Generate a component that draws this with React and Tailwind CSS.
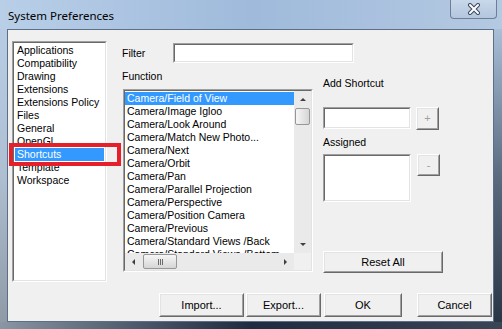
import React from "react"

const sections = [
  "Applications",
  "Compatibility",
  "Drawing",
  "Extensions",
  "Extensions Policy",
  "Files",
  "General",
  "OpenGl",
  "Shortcuts",
  "Template",
  "Workspace",
]

const functions = [
  "Camera/Field of View",
  "Camera/Image Igloo",
  "Camera/Look Around",
  "Camera/Match New Photo...",
  "Camera/Next",
  "Camera/Orbit",
  "Camera/Pan",
  "Camera/Parallel Projection",
  "Camera/Perspective",
  "Camera/Position Camera",
  "Camera/Previous",
  "Camera/Standard Views /Back",
  "Camera/Standard Views /Bottom",
]

const Sunken = ({ className = "", children }) => (
  <div className={`border border-[#a0a0a0] border-b-white border-r-white ${className}`}>
    <div className="w-full h-full border border-[#696969] border-b-[#e3e3e3] border-r-[#e3e3e3] bg-white overflow-hidden relative">
      {children}
    </div>
  </div>
)

const Button = ({ className = "", label, disabled }) => (
  <div className={`border border-white border-b-[#696969] border-r-[#696969] ${className}`}>
    <div
      className={`w-full h-full border border-[#e3e3e3] border-b-[#a0a0a0] border-r-[#a0a0a0] bg-[#f0f0f0] flex items-center justify-center text-[11px] ${
        disabled ? "text-[#a0a0a0]" : "text-black"
      }`}
    >
      {label}
    </div>
  </div>
)

const Arrow = ({ dir }) => {
  const pts = {
    up: "1,5 4,2 7,5",
    down: "1,2 4,5 7,2",
    left: "5,1 2,4 5,7",
    right: "2,1 5,4 2,7",
  }
  return (
    <svg width="8" height="8" viewBox="0 0 8 8">
      <polygon points={pts[dir]} fill="#404040" />
    </svg>
  )
}

const VThumb = () => (
  <div className="w-[15px] h-[17px] rounded-[2px] border border-[#979797] bg-gradient-to-r from-[#f6f6f6] to-[#d6d6d6]" />
)

const HThumb = () => (
  <div className="w-[34px] h-[15px] ml-[1px] rounded-[2px] border border-[#979797] bg-gradient-to-b from-[#f6f6f6] to-[#d6d6d6] flex items-center justify-center">
    <div className="flex gap-[1px]">
      <div className="w-[1px] h-[6px] bg-[#6a6a6a]" />
      <div className="w-[1px] h-[6px] bg-[#6a6a6a]" />
      <div className="w-[1px] h-[6px] bg-[#6a6a6a]" />
    </div>
  </div>
)

export default function App() {
  return (
    <div
      className="w-[502px] h-[329px] flex flex-col bg-gradient-to-r from-[#b9cfe8] via-[#9fbadb] to-[#b4c9e2] text-[10.5px] leading-[13px]"
      style={{ fontFamily: '"Liberation Sans", Arial, sans-serif' }}
    >
      {/* title bar */}
      <div className="h-[29px] flex items-start shrink-0">
        <div className="pl-[8px] pt-[8px] text-[11.5px] leading-[15px] text-black" style={{ fontFamily: '"Noto Sans", "Open Sans", sans-serif' }}>
          System Preferences
        </div>
        <div className="ml-auto mr-[5px] w-[47px] h-[19px] border border-t-0 border-[#6e7f95] rounded-b-[4px] bg-gradient-to-b from-[#c9d8ea] to-[#b3c6de] flex items-center justify-center">
          <svg width="14" height="12" viewBox="0 0 14 12">
            <path d="M3 2 L11 10 M11 2 L3 10" stroke="#3b4a5d" strokeWidth="4" strokeLinecap="round" />
            <path d="M3 2 L11 10 M11 2 L3 10" stroke="#ffffff" strokeWidth="2" strokeLinecap="round" />
          </svg>
        </div>
      </div>

      <div className="flex flex-1 min-h-0">
        <div className="w-[7px] bg-gradient-to-b from-[#b7cce4] via-[#aebfd2] to-[#8f9aa6]" />

        {/* client area */}
        <div className="w-[487px] border border-[#5d6f86] bg-[#f0f0f0] flex flex-col">
          <div className="flex pl-[4px] pt-[11px]">
            {/* left list */}
            <div className="relative">
              <Sunken className="w-[95px] h-[241px]">
                <div className="pt-[1px]">
                  {sections.map((s) => (
                    <div
                      key={s}
                      className={`h-[13px] pl-[2px] mx-[1px] whitespace-nowrap ${
                        s === "Shortcuts" ? "bg-[#3399ff] text-white" : "text-black"
                      }`}
                    >
                      {s}
                    </div>
                  ))}
                </div>
              </Sunken>
              <div className="absolute left-[-3px] top-[102px] w-[112px] h-[23px] border-[4px] border-[#e5202a]" />
            </div>

            {/* right side */}
            <div className="ml-[15px] pt-[2px] flex flex-col">
              <div className="flex items-center">
                <div className="w-[51px] text-black">Filter</div>
                <Sunken className="w-[181px] h-[20px]" />
              </div>

              <div className="flex mt-[7px]">
                <div className="flex flex-col">
                  <div className="text-black h-[13px]">Function</div>
                  <Sunken className="ml-[1px] mt-[6px] w-[190px] h-[183px]">
                    <div className="flex h-[162px]">
                      <div className="w-[169px] pt-[1px]">
                        {functions.map((f, i) => (
                          <div
                            key={f}
                            className={`h-[13px] pl-[2px] whitespace-nowrap ${
                              i === 0 ? "bg-[#3399ff] text-white" : "text-black"
                            }`}
                          >
                            {f}
                          </div>
                        ))}
                      </div>
                      {/* vertical scrollbar */}
                      <div className="w-[17px] h-[162px] bg-[#eaeaea] flex flex-col items-center">
                        <div className="h-[17px] flex items-center justify-center">
                          <Arrow dir="up" />
                        </div>
                        <VThumb />
                        <div className="flex-1" />
                        <div className="h-[17px] flex items-center justify-center">
                          <Arrow dir="down" />
                        </div>
                      </div>
                    </div>
                    {/* horizontal scrollbar */}
                    <div className="flex h-[17px]">
                      <div className="w-[169px] bg-[#eaeaea] flex items-center">
                        <div className="w-[17px] flex items-center justify-center">
                          <Arrow dir="left" />
                        </div>
                        <HThumb />
                        <div className="flex-1" />
                        <div className="w-[17px] flex items-center justify-center">
                          <Arrow dir="right" />
                        </div>
                      </div>
                      <div className="w-[17px] bg-[#f0f0f0]" />
                    </div>
                  </Sunken>
                </div>

                <div className="ml-[10px] flex flex-col">
                  <div className="mt-[7px] text-black h-[13px]">Add Shortcut</div>
                  <div className="flex mt-[17px]">
                    <Sunken className="w-[88px] h-[22px]" />
                    <Button className="ml-[5px] w-[23px] h-[23px]" label="+" disabled />
                  </div>
                  <div className="mt-[6px] text-black h-[13px]">Assigned</div>
                  <div className="flex mt-[5px]">
                    <Sunken className="w-[88px] h-[48px]" />
                    <Button className="ml-[6px] w-[23px] h-[22px]" label="-" disabled />
                  </div>
                  <Button className="mt-[49px] w-[120px] h-[22px]" label="Reset All" />
                </div>
              </div>
            </div>
          </div>

          {/* bottom buttons */}
          <div className="flex mt-[11px]">
            <Button className="ml-[151px] w-[85px] h-[24px]" label="Import..." />
            <Button className="ml-[2px] w-[75px] h-[24px]" label="Export..." />
            <Button className="ml-[3px] w-[78px] h-[24px]" label="OK" />
            <Button className="ml-[15px] w-[75px] h-[24px]" label="Cancel" />
          </div>
        </div>

        <div className="w-[8px] bg-gradient-to-b from-[#a9bfd9] via-[#5b6c80] to-[#2a3646]" />
      </div>

      <div className="h-[7px] shrink-0 bg-gradient-to-r from-[#8a96a3] via-[#1f2c3f] to-[#3a4556]" />
    </div>
  )
}
